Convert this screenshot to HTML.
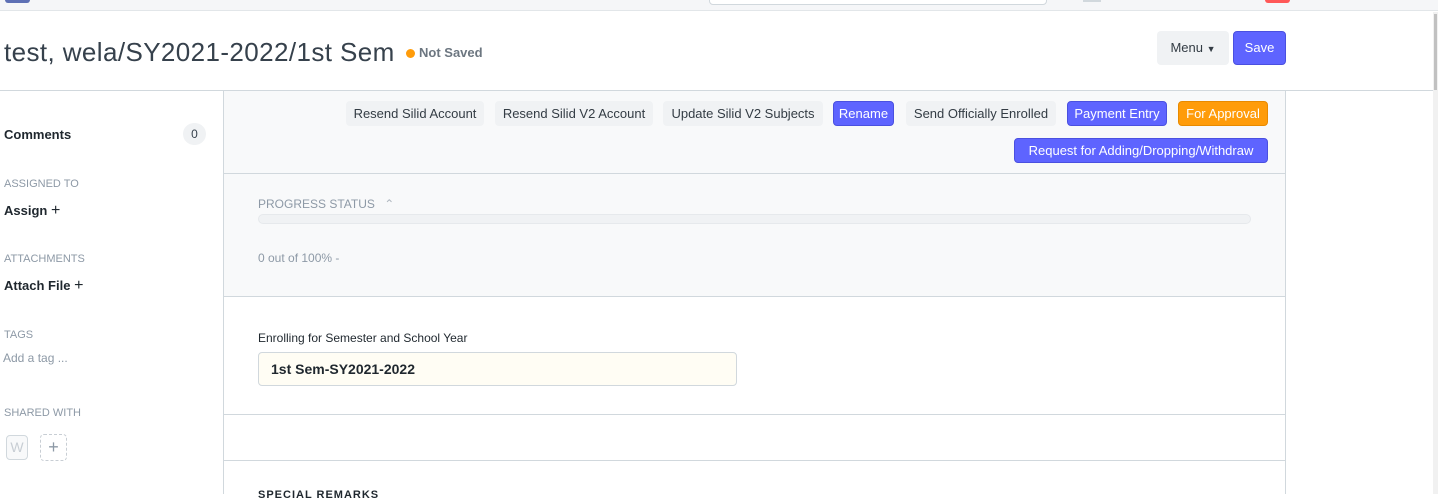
<!DOCTYPE html>
<html><head><style>
*{box-sizing:border-box;margin:0;padding:0}
body{width:1438px;height:494px;overflow:hidden;background:#fff;font-family:"Liberation Sans",sans-serif;color:#1f272e;position:relative}
.a{position:absolute}
.btn{position:absolute;height:25px;border-radius:4px;font-size:13px;line-height:25px;text-align:center;white-space:nowrap}
.g{background:#f0f2f4;color:#333c44}
.p{background:#5e64ff;color:#fff;border:1px solid #4a50e0;line-height:23px}
.o{background:#ff9c0a;color:#fff;border:1px solid #e88a00;line-height:23px}
.lbl{font-size:11px;color:#8d99a6;text-transform:uppercase}
.bold{font-size:13px;font-weight:bold;color:#1f272e}
</style></head><body>
<div class="a" style="left:0;top:0;width:1438px;height:11px;background:#f5f6f8;border-bottom:1px solid #e2e6e9"></div>
<div class="a" style="left:5px;top:0;width:25px;height:3px;background:#5e70b5;border-radius:0 0 3px 3px"></div>
<div class="a" style="left:709px;top:-5px;width:338px;height:10px;background:#fff;border:1px solid #d1d8dd;border-radius:4px"></div>
<div class="a" style="left:1083px;top:0;width:18px;height:2px;background:#d1d8dd"></div>
<div class="a" style="left:1265px;top:0;width:25px;height:3px;background:#ff5858;border-radius:0 0 3px 3px"></div>
<div class="a" style="left:1433px;top:12px;width:5px;height:482px;background:#f1f1f1"></div>
<div class="a" style="left:1434px;top:14px;width:3px;height:76px;background:#c1c1c1"></div>

<div class="a" style="left:4px;top:37px;font-size:26px;letter-spacing:0.4px;color:#36414c;white-space:nowrap">test, wela/SY2021-2022/1st Sem</div>
<div class="a" style="left:406px;top:49px;width:9px;height:9px;border-radius:50%;background:#ff9c0a"></div>
<div class="a" style="left:419px;top:45px;font-size:13px;font-weight:bold;color:#6c7680">Not Saved</div>
<div class="btn g" style="left:1157px;top:31px;width:72px;height:34px;line-height:34px">Menu <span style="font-size:9px">▼</span></div>
<div class="btn p" style="left:1233px;top:31px;width:53px;height:34px;line-height:32px">Save</div>
<div class="a" style="left:0;top:90px;width:1433px;height:1px;background:#d1d8dd"></div>

<div class="a" style="left:223px;top:91px;width:1px;height:403px;background:#d1d8dd"></div>
<div class="a" style="left:1285px;top:91px;width:1px;height:403px;background:#d1d8dd"></div>
<div class="a" style="left:224px;top:91px;width:1061px;height:83px;background:#f8f9fa;border-bottom:1px solid #d1d8dd"></div>
<div class="a" style="left:224px;top:174px;width:1061px;height:123px;background:#f8f9fa;border-bottom:1px solid #d1d8dd"></div>
<div class="a" style="left:224px;top:414px;width:1061px;height:1px;background:#d1d8dd"></div>
<div class="a" style="left:224px;top:460px;width:1061px;height:1px;background:#d1d8dd"></div>

<div class="btn g" style="left:346px;top:101px;width:138px">Resend Silid Account</div>
<div class="btn g" style="left:495px;top:101px;width:158px">Resend Silid V2 Account</div>
<div class="btn g" style="left:663px;top:101px;width:160px">Update Silid V2 Subjects</div>
<div class="btn p" style="left:833px;top:101px;width:61px">Rename</div>
<div class="btn g" style="left:906px;top:101px;width:150px">Send Officially Enrolled</div>
<div class="btn p" style="left:1067px;top:101px;width:100px">Payment Entry</div>
<div class="btn o" style="left:1178px;top:101px;width:90px">For Approval</div>
<div class="btn p" style="left:1014px;top:138px;width:254px">Request for Adding/Dropping/Withdraw</div>

<div class="a lbl" style="left:258px;top:197px;font-size:12px;color:#8d99a6">PROGRESS STATUS <span style="margin-left:6px;color:#b0b8c0">&#8963;</span></div>
<div class="a" style="left:258px;top:214px;width:993px;height:10px;background:#f0f2f4;border:1px solid #e6e9ec;border-radius:5px"></div>
<div class="a" style="left:258px;top:251px;font-size:12px;color:#8d99a6">0 out of 100% -</div>

<div class="a" style="left:258px;top:331px;font-size:12px;color:#1f272e">Enrolling for Semester and School Year</div>
<div class="a" style="left:258px;top:352px;width:479px;height:34px;background:#fffdf4;border:1px solid #d1d8dd;border-radius:4px;padding-left:12px;line-height:32px;font-size:14px;font-weight:bold">1st Sem-SY2021-2022</div>
<div class="a" style="left:258px;top:489px;font-size:11px;font-weight:bold;letter-spacing:1px">SPECIAL REMARKS</div>

<div class="a bold" style="left:4px;top:127px">Comments</div>
<div class="a" style="left:183px;top:123px;width:23px;height:22px;border-radius:11px;background:#f0f2f4;font-size:12px;text-align:center;line-height:22px;color:#36414c">0</div>
<div class="a lbl" style="left:4px;top:178px">Assigned To</div>
<div class="a bold" style="left:4px;top:202px">Assign <span style="font-weight:normal;font-size:16px">+</span></div>
<div class="a lbl" style="left:4px;top:253px">Attachments</div>
<div class="a bold" style="left:4px;top:277px">Attach File <span style="font-weight:normal;font-size:16px">+</span></div>
<div class="a lbl" style="left:4px;top:329px">Tags</div>
<div class="a" style="left:3px;top:351px;font-size:12px;color:#8d99a6">Add a tag ...</div>
<div class="a lbl" style="left:4px;top:407px">Shared With</div>
<div class="a" style="left:6px;top:435px;width:22px;height:25px;border:1px solid #d1d8dd;border-radius:4px;background:#f8f9fa;color:#c8ced4;font-size:14px;text-align:center;line-height:23px">W</div>
<div class="a" style="left:40px;top:434px;width:27px;height:27px;border:1px dashed #c8ced4;border-radius:4px;color:#8d99a6;font-size:18px;text-align:center;line-height:24px">+</div>
</body></html>
